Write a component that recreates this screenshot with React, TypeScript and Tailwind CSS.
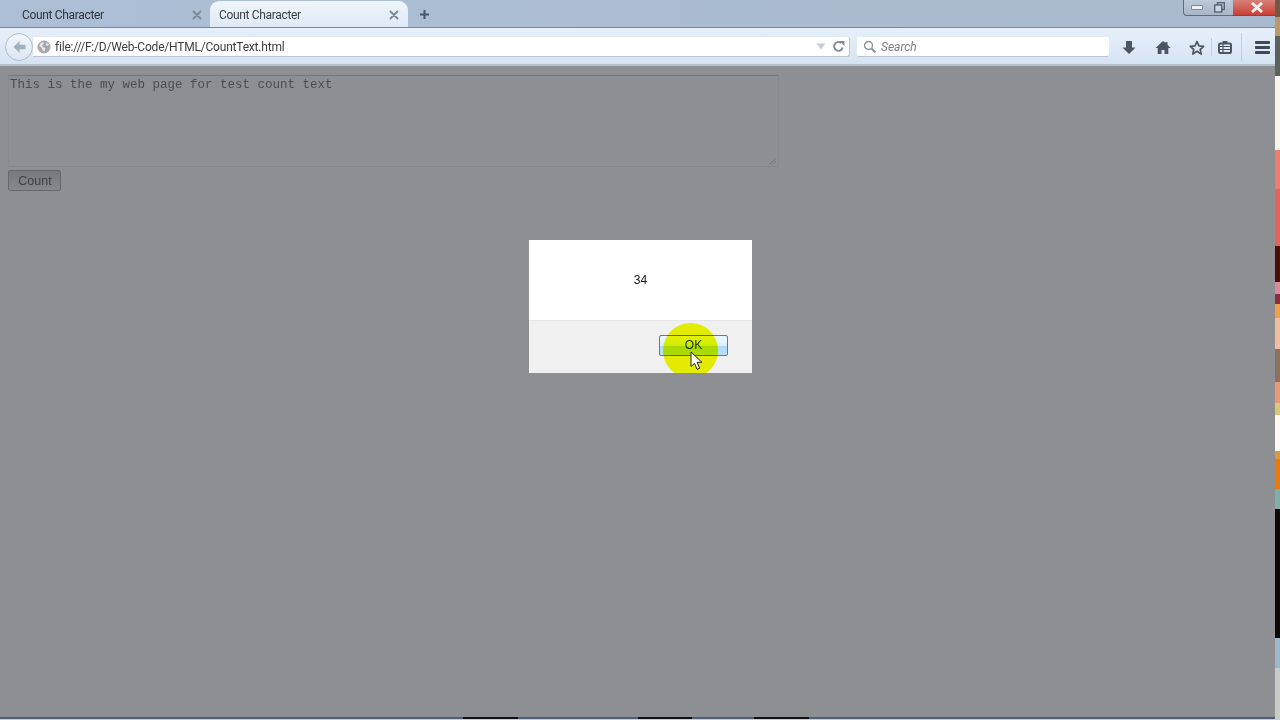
import React from "react";

const strip: [number, string][] = [
  [17, "#6f5a45"], [20, "#b89a6c"], [40, "#59625c"], [75, "#f8f4ee"], [40, "#ee7d6e"], [58, "#e2645c"],
  [37, "#4a0d0a"], [12, "#d88aa0"], [10, "#8c2f3a"], [14, "#f0a048"], [32, "#f0bda0"], [33, "#8c7060"],
  [22, "#e89a78"], [12, "#dcc878"], [37, "#fbf8f0"], [8, "#d89a40"], [30, "#e87a10"], [21, "#7fb0a8"],
  [131, "#0c0804"], [30, "#9cb8cc"], [53, "#c8ccc8"],
];

function Close({ className }: { className: string }) {
  return (
    <svg width="10" height="10" viewBox="0 0 10 10" className={className}>
      <path d="M1.5 1.5l7 7M8.500 1.500l-7 7" stroke="currentColor" strokeWidth="2" strokeLinecap="round" />
    </svg>
  );
}

function Tab({ active }: { active?: boolean }) {
  return (
    <div
      className={
        active
          ? "flex h-[26px] w-[198px] shrink-0 items-center justify-between self-end rounded-t-[9px] bg-gradient-to-b from-[#f0f5fb] to-[#dfe9f5] pl-[9px] pr-[9px] pt-[2px] text-[#3b4048]"
          : "flex h-[26px] w-[204px] shrink-0 items-center justify-between self-end pl-[22px] pr-[2px] pt-[2px] text-[#30353c]"
      }
    >
      <span className="font-['Roboto',sans-serif] text-[12px] leading-none tracking-[-0.33px]">Count Character</span>
      <Close className="text-[#7f8a98]" />
    </div>
  );
}

export default function App() {
  return (
    <div className="relative flex h-[720px] w-[1280px] overflow-hidden bg-[#8e8f92] font-['Roboto',sans-serif]">
      <div className="flex w-[1275px] shrink-0 flex-col">
        {/* tab strip */}
        <div className="flex h-[28px] shrink-0 items-stretch border-b border-[#73889c] bg-gradient-to-r from-[#adbfd6] to-[#a9bace] pl-0">
          <Tab />
          <div className="w-[6px] shrink-0" />
          <Tab active />
          <div className="flex w-[33px] items-center justify-center pr-[1px] pt-[2px] text-[#46566a]">
            <svg width="11" height="11" viewBox="0 0 11 11">
              <path d="M5.5 1v9M1 5.500h9" stroke="currentColor" strokeWidth="2" />
            </svg>
          </div>
          <div className="flex-1" />
          <div className="flex h-[16px] self-start">
            <div className="flex w-[27px] items-center justify-center rounded-bl-[4px] border-b border-l border-[#5d6c7e] bg-gradient-to-b from-[#bcc9d8] to-[#a8b6c8]">
              <div className="h-[5px] w-[12px] rounded-[1px] border border-[#7c8896] bg-[#eef2f6]" />
            </div>
            <div className="flex w-[23px] items-center justify-center border-b border-[#5d6c7e] bg-gradient-to-b from-[#bcc9d8] to-[#a8b6c8] pr-[4px]">
              <svg width="11" height="11" viewBox="0 0 11 11" fill="none" stroke="#4f5c6c" strokeWidth="1.3">
                <rect x="3.5" y="0.7" width="6.8" height="6.8" />
                <rect x="0.7" y="3" width="7" height="7" fill="#ccd6e2" />
              </svg>
            </div>
            <div className="flex w-[42px] items-center justify-center border-b border-[#7c4a4a] bg-gradient-to-b from-[#d88078] to-[#c83c34] pl-[6px] text-[#f4f0ee]">
              <svg width="14" height="11" viewBox="0 0 14 11">
                <path d="M2 1l10 9M12 1L2 10" stroke="currentColor" strokeWidth="3" />
              </svg>
            </div>
          </div>
        </div>

        {/* toolbar */}
        <div className="relative flex h-[38px] shrink-0 items-center border-b-2 border-[#b5c0cc] bg-gradient-to-b from-[#e6f0fb] to-[#d6e4f2] pl-[33px] pt-[2px]">
          <div className="absolute left-[5px] top-[5px] flex h-[28px] w-[28px] items-center justify-center rounded-full border border-[#aebccb] bg-gradient-to-b from-[#f2f6fb] to-[#dce6f1]">
            <svg width="15" height="14" viewBox="0 0 15 14">
              <path d="M7.500 1L1.500 7l6 6V9.200h6V4.800h-6z" fill="#a3b0be" />
            </svg>
          </div>
          <div className="flex h-[20px] w-[817px] shrink-0 items-center rounded-r-[3px] border-b border-r border-[#bcc6d2] bg-white pl-[4px] pr-[3px]">
            <svg width="14" height="14" viewBox="0 0 14 14" className="shrink-0">
              <circle cx="7" cy="7" r="6.500" fill="#a4a7ab" />
              <path d="M3 3.500l3-1.500 1 2-2 1 1 2 2.500 1-1 3.500-2-1-1-3-2-1zM9.500 2.500l2.500 2-1.500 1.500-1.500-1z" fill="#e3e6ea" />
            </svg>
            <span className="ml-[4px] whitespace-nowrap pt-[1px] text-[12px] leading-none tracking-[-0.2px] text-[#3a3d42]">file:///F:/D/Web-Code/HTML/CountText.html</span>
            <div className="flex-1" />
            <svg width="10" height="7" viewBox="0 0 10 7" className="mr-[6px]">
              <path d="M0.500 0.500h9L5 6.500z" fill="#c6ced8" />
            </svg>
            <svg width="13" height="13" viewBox="0 0 13 13" fill="none" className="mr-[1px]">
              <path d="M10.800 7.500A4.400 4.400 0 1 1 9.300 3" stroke="#7f8a96" strokeWidth="1.900" />
              <path d="M7.500 1h5v5z" fill="#7f8a96" />
            </svg>
          </div>
          <div className="ml-[7px] flex h-[20px] w-[252px] shrink-0 items-center rounded-[2px] border-b border-[#bcc6d2] bg-white pl-[6px]">
            <svg width="14" height="14" viewBox="0 0 14 14" fill="none" stroke="#8b939d">
              <circle cx="5.500" cy="5.500" r="4" strokeWidth="1.400" />
              <path d="M8.500 8.500l4 4" strokeWidth="2" />
            </svg>
            <span className="ml-[4px] pt-[1px] text-[12px] italic leading-none text-[#7d8084]">Search</span>
          </div>
          <div className="flex h-full flex-1 items-center">
            <svg width="14" height="15" viewBox="0 0 14 15" className="ml-[13px] shrink-0">
              <path d="M4 1h6v6.500h3.500L7 14 .5 7.500H4z" fill="#4a5663" />
            </svg>
            <svg width="16" height="15" viewBox="0 0 16 15" className="ml-[19px] shrink-0">
              <path d="M8 1L.5 8h2.200v6h3.800v-4h3v4h3.800V8h2.200L12.500 4.800V2h-2v1z" fill="#4a5663" />
            </svg>
            <svg width="16" height="15" viewBox="0 0 16 15" className="ml-[18px] shrink-0">
              <path d="M8 1.500l2 4.300 4.700.5-3.500 3.200 1 4.600L8 11.300l-4.200 2.800 1-4.600L1.300 6.300 6 5.800z" fill="none" stroke="#4a5663" strokeWidth="1.700" strokeLinejoin="round" />
            </svg>
            <div className="ml-[6px] h-[18px] w-px shrink-0 bg-[#c3cfdc]" />
            <svg width="14" height="13" viewBox="0 0 14 13" className="ml-[6px] shrink-0">
              <rect x="1" y="2.500" width="12" height="9.500" rx="1.200" fill="#dbe6f2" stroke="#4a5663" strokeWidth="2" />
              <rect x="4.500" y="0" width="5" height="3" fill="#4a5663" />
              <path d="M2 5.500h10M2 8.500h10" stroke="#4a5663" strokeWidth="1.200" />
              <path d="M5 3v9" stroke="#4a5663" strokeWidth="1.200" />
            </svg>
            <div className="ml-[9px] h-[28px] w-px shrink-0 bg-[#c3cfdc]" />
            <div className="ml-[13px] flex w-[15px] shrink-0 flex-col gap-[2px]">
              <div className="h-[3px] rounded-[1px] bg-[#3e4954]" />
              <div className="h-[3px] rounded-[1px] bg-[#3e4954]" />
              <div className="h-[3px] rounded-[1px] bg-[#3e4954]" />
            </div>
          </div>
        </div>

        {/* page */}
        <div className="flex min-h-0 flex-1 flex-col items-start bg-[#8e8f92] pl-[8px] pt-[9px]">
          <div className="relative h-[92px] w-[771px] shrink-0 border border-t-[#77787b] border-x-[#88898c] border-b-[#86878a] px-[1px] py-[2px] font-['Liberation_Mono',monospace] text-[12.5px] leading-[14px] text-[#4c4d50]">
            This is the my web page for test count text
            <svg width="8" height="8" viewBox="0 0 8 8" className="absolute bottom-[1px] right-[1px]">
              <path d="M7 1L1 7M7 4L4 7" stroke="#77787b" strokeWidth="1" />
            </svg>
          </div>
          <button className="mt-[3px] flex h-[21px] w-[53px] items-center justify-center rounded-[2px] border border-[#66676a] bg-gradient-to-b from-[#77787b] to-[#87888b] pl-[1px] pt-[1px] font-['Liberation_Sans',sans-serif] text-[12.5px] leading-none text-[#404144]">
            Count
          </button>
        </div>

        <div className="flex h-[3px] shrink-0 border-t-2 border-[#4f5d78] bg-[#c9ccd0] pl-[463px]">
          <div className="-mt-[2px] h-[2px] w-[55px] bg-[#111]" />
          <div className="-mt-[2px] ml-[120px] h-[2px] w-[54px] bg-[#111]" />
          <div className="-mt-[2px] ml-[62px] h-[2px] w-[55px] bg-[#111]" />
        </div>
      </div>

      {/* desktop visible at the right */}
      <div className="flex w-[5px] shrink-0 flex-col">
        {strip.map(([h, c], i) => (
          <div key={i} className="blur-[0.5px]" style={{ height: h, backgroundColor: c }} />
        ))}
      </div>

      {/* modal alert */}
      <div className="absolute left-[529px] top-[240px] flex h-[133px] w-[223px] flex-col overflow-hidden bg-white font-['Liberation_Sans',sans-serif]">
        <div className="flex h-[80px] shrink-0 items-center justify-center text-[12px] leading-none text-[#111]">34</div>
        <div className="flex flex-1 items-start justify-end border-t border-[#e6e6e6] bg-[#f0f0f0] pr-[24px] pt-[14px]">
          <div className="flex h-[21px] w-[69px] items-center justify-center rounded-[2px] border border-[#3f84b8] bg-[linear-gradient(to_bottom,#eef7fd_0%,#dcf0fb_50%,#aedcf5_52%,#b8e0f6_100%)] pb-[1px] text-[12px] leading-none text-[#17324a]">
            OK
          </div>
        </div>
        <div className="absolute left-[134px] top-[83px] h-[55px] w-[55px] rounded-full bg-[#f2fa00] mix-blend-multiply" />
        <svg width="13" height="20" viewBox="0 0 13 20" className="absolute left-[161px] top-[111px]">
          <path d="M1 1v14.500l3.500-3.200 2.600 6 2.600-1.100-2.600-5.900H12z" fill="#fff" stroke="#222" strokeWidth="1" strokeLinejoin="round" />
        </svg>
      </div>
    </div>
  );
}
